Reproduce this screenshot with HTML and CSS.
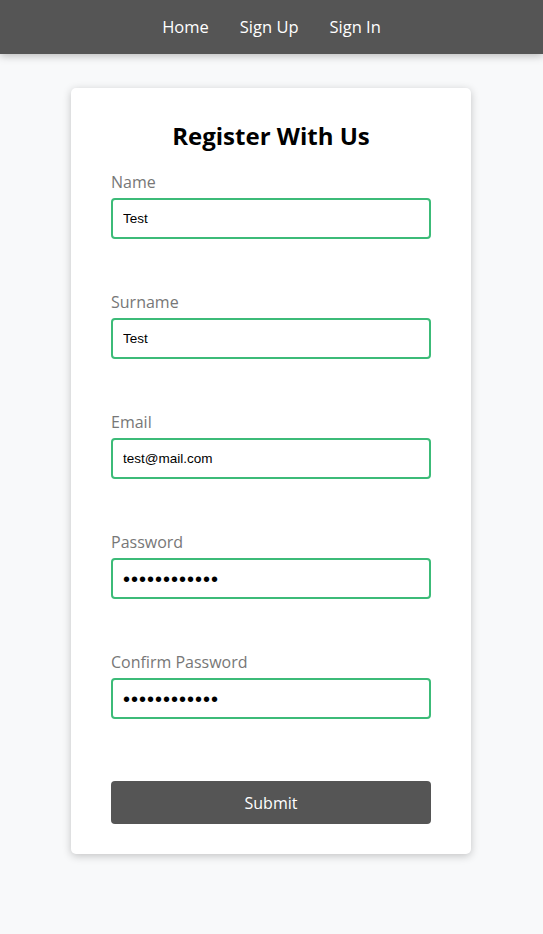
FILE: index.html
```html
<!DOCTYPE html>
<html lang="en">
<head>
<meta charset="utf-8">
<title>Register</title>
<link rel="stylesheet" href="styles.css">
</head>
<body>
<nav class="navbar">
  <a class="nav-link" href="#">Home</a>
  <a class="nav-link" href="#">Sign Up</a>
  <a class="nav-link" href="#">Sign In</a>
</nav>
<main class="page">
  <form class="card">
    <h1 class="title">Register With Us</h1>
    <div class="field">
      <label class="label">Name</label>
      <input class="input" type="text" value="Test">
    </div>
    <div class="field">
      <label class="label">Surname</label>
      <input class="input" type="text" value="Test">
    </div>
    <div class="field">
      <label class="label">Email</label>
      <input class="input" type="email" value="test@mail.com">
    </div>
    <div class="field">
      <label class="label">Password</label>
      <input class="input" type="password" value="password1234">
    </div>
    <div class="field">
      <label class="label">Confirm Password</label>
      <input class="input" type="password" value="password1234">
    </div>
    <button class="submit" type="button">Submit</button>
  </form>
</main>
</body>
</html>
```
FILE: styles.css
```css
* { box-sizing: border-box; }
html, body { margin: 0; padding: 0; }
body {
  background: #f8f9fa;
  font-family: "Open Sans", sans-serif;
  min-height: 934px;
}
.navbar {
  height: 54px;
  background: #555555;
  display: flex;
  justify-content: center;
  align-items: center;
  gap: 31px;
  box-shadow: 0 2px 8px rgba(0,0,0,0.25);
}
.nav-link {
  color: #ffffff;
  text-decoration: none;
  font-size: 16.5px;
  line-height: 1;
}
.page {
  display: flex;
  justify-content: center;
  padding-top: 34px;
  padding-right: 1px;
}
.card {
  width: 400px;
  background: #ffffff;
  border-radius: 5px;
  box-shadow: 0 2px 8px rgba(0,0,0,0.22);
  padding: 30px 40px 30px;
  display: flex;
  flex-direction: column;
}
.title {
  margin: 0 0 16px;
  text-align: center;
  font-size: 24px;
  font-weight: 700;
  color: #000;
  line-height: 36px;
}
.field {
  display: flex;
  flex-direction: column;
  height: 120px;
}
.label {
  color: #777777;
  font-size: 16px;
  line-height: 22px;
  padding-top: 1px;
  margin-bottom: 5px;
}
.input {
  height: 41px;
  width: 100%;
  border: 2px solid #3cbb78;
  border-radius: 4px;
  padding: 0 10px;
  font-family: "Liberation Sans", Arial, sans-serif;
  font-size: 13.5px;
  color: #000;
  background: #fff;
  outline: none;
}
.input[type="password"] {
  font-size: 20px;
  letter-spacing: 1px;
  padding-top: 2px;
}
.submit {
  margin-top: 11px;
  height: 43px;
  width: 100%;
  background: #555555;
  color: #ffffff;
  border: none;
  border-radius: 4px;
  font-family: "Open Sans", sans-serif;
  font-size: 16px;
}
```
